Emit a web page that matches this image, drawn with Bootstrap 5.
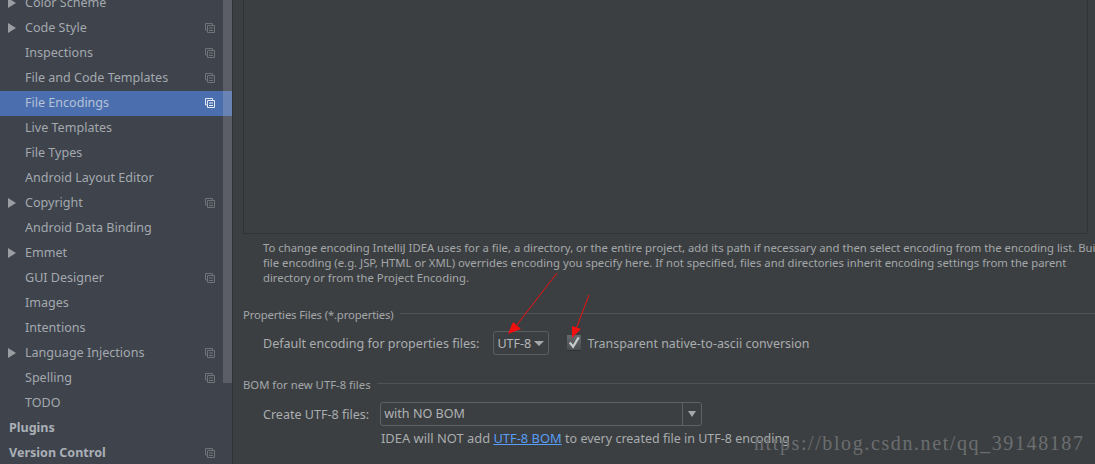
<!DOCTYPE html>
<html lang="en">
<head>
<meta charset="utf-8">
<title>File Encodings</title>
<link href="https://cdn.jsdelivr.net/npm/bootstrap@5.3.0/dist/css/bootstrap.min.css" rel="stylesheet">
<style>
html,body{height:464px;overflow:hidden}
body{background:#3c3f41;color:#a9adb0;font-family:"Noto Sans","Open Sans",sans-serif;font-size:12.5px;line-height:15px;position:relative}
.shell{height:464px;width:1095px}
.side{width:232px;background:#3e434c;flex:none;overflow:hidden;position:relative}
.side-list{margin-top:-9px;width:223px;flex:none}
.side-row{height:25px;padding-left:25px;padding-right:8px;padding-bottom:2px;position:relative;color:#a4a9ae;font-size:12.55px}
.side-row.top{padding-left:9px;font-weight:700;color:#aab0b6}
.side-row.sel{background:#4b6eaf;color:#b5c2d6}
.side-row .tri{position:absolute;left:8px;top:7px;width:0;height:0;border-left:8px solid #9a9da1;border-top:5px solid transparent;border-bottom:5px solid transparent}
.sel-strip{position:absolute;left:223px;top:91px;width:9px;height:25px;background:#6a83b5;z-index:2}
.scroll-track{width:9px;flex:none}
.scroll-thumb{width:9px;height:383px;background:#5b5e66}
.divider{width:1px;background:#2f3234;flex:none}
.main{padding-left:10px;min-width:0;flex:1 1 auto;overflow:hidden}
.tbl-box{height:234px;margin-right:7px;border-left:1px solid #313335;border-right:1px solid #313335;border-bottom:1px solid #313335;flex:none}
.hint{padding-left:20px;margin-top:6px;height:45px;font-size:11.3px;color:#a3a7aa;white-space:nowrap;overflow:hidden;flex:none}
.sec-head{color:#a3a7aa;font-size:11.3px;height:15px;margin-top:22px;flex:none}
.sec-tight{letter-spacing:-.15px}
.sec-rule{flex:1 1 auto;height:1px;background:#505355;margin-left:6px;margin-top:-3px}
.prop-row{padding-left:20px;margin-top:9px;height:24px;font-size:12.55px;flex:none}
.utf-pick{width:56px;height:24px;border:1px solid #5c5f61;border-radius:3px;margin-left:14px;padding-left:3px;color:#b4b7b9}
.pick-tri{width:0;height:0;border-top:5px solid #a5a8aa;border-left:5px solid transparent;border-right:5px solid transparent;margin-left:3px}
.chk{width:14px;height:16px;background:linear-gradient(#66696b,#4a4d4f);border-bottom:1px solid #2f3133;margin-left:18px;margin-right:6px;display:block;flex:none}
.trans-label{font-size:12.45px}
.bom-row{padding-left:20px;margin-top:10px;height:24px;font-size:12.55px;flex:none}
.combo{width:322px;height:24px;border:1px solid #5f6264;border-radius:3px;margin-left:11px;padding-left:3px;color:#b0b3b5;background:#3c3f41}
.combo-text{padding-bottom:2px}
.combo-btn{width:19px;height:22px;border-left:1px solid #5f6264}
.combo-btn i{width:0;height:0;border-top:6px solid #a5a8aa;border-left:4px solid transparent;border-right:4px solid transparent;display:block}
.bom-note{padding-left:138px;margin-top:5px;font-size:12.9px;white-space:nowrap;color:#a8acaf;flex:none}
.bom-note a{color:#589df6;text-decoration:underline}
.note-tail{font-size:12.5px}
.mark-text{position:absolute;left:754px;top:432px;font-family:"Liberation Serif",serif;font-size:20px;line-height:22px;letter-spacing:1.6px;color:#6b6e70;white-space:nowrap;z-index:5}
.arrows{position:absolute;left:0;top:0;z-index:6;pointer-events:none}
</style>
</head>
<body>
<div class="shell d-flex">
  <div class="side d-flex">
    <div class="side-list">
      <div class="side-row d-flex align-items-center justify-content-between"><span class="tri"></span><span>Color Scheme</span></div>
      <div class="side-row d-flex align-items-center justify-content-between"><span class="tri"></span><span>Code Style</span><svg width="10" height="10" viewBox="0 0 10 10" fill="none" stroke="#6f7378"><path d="M7.5 2v-1.500h-7v6.500h2"/><path d="M2.500 2.500h7v7h-7z"/><path d="M4 5h4M4 7.500h4"/></svg></div>
      <div class="side-row d-flex align-items-center justify-content-between"><span>Inspections</span><svg width="10" height="10" viewBox="0 0 10 10" fill="none" stroke="#6f7378"><path d="M7.5 2v-1.500h-7v6.500h2"/><path d="M2.500 2.500h7v7h-7z"/><path d="M4 5h4M4 7.500h4"/></svg></div>
      <div class="side-row d-flex align-items-center justify-content-between"><span>File and Code Templates</span><svg width="10" height="10" viewBox="0 0 10 10" fill="none" stroke="#6f7378"><path d="M7.5 2v-1.500h-7v6.500h2"/><path d="M2.500 2.500h7v7h-7z"/><path d="M4 5h4M4 7.500h4"/></svg></div>
      <div class="side-row sel d-flex align-items-center justify-content-between"><span>File Encodings</span><svg width="10" height="10" viewBox="0 0 10 10" fill="none" stroke="#e3e9f3"><path d="M7.5 2v-1.500h-7v6.500h2"/><path d="M2.500 2.500h7v7h-7z"/><path d="M4 5h4M4 7.500h4"/></svg></div>
      <div class="side-row d-flex align-items-center"><span>Live Templates</span></div>
      <div class="side-row d-flex align-items-center"><span>File Types</span></div>
      <div class="side-row d-flex align-items-center"><span>Android Layout Editor</span></div>
      <div class="side-row d-flex align-items-center justify-content-between"><span class="tri"></span><span>Copyright</span><svg width="10" height="10" viewBox="0 0 10 10" fill="none" stroke="#6f7378"><path d="M7.5 2v-1.500h-7v6.500h2"/><path d="M2.500 2.500h7v7h-7z"/><path d="M4 5h4M4 7.500h4"/></svg></div>
      <div class="side-row d-flex align-items-center"><span>Android Data Binding</span></div>
      <div class="side-row d-flex align-items-center"><span class="tri"></span><span>Emmet</span></div>
      <div class="side-row d-flex align-items-center justify-content-between"><span>GUI Designer</span><svg width="10" height="10" viewBox="0 0 10 10" fill="none" stroke="#6f7378"><path d="M7.5 2v-1.500h-7v6.500h2"/><path d="M2.500 2.500h7v7h-7z"/><path d="M4 5h4M4 7.500h4"/></svg></div>
      <div class="side-row d-flex align-items-center"><span>Images</span></div>
      <div class="side-row d-flex align-items-center"><span>Intentions</span></div>
      <div class="side-row d-flex align-items-center justify-content-between"><span class="tri"></span><span>Language Injections</span><svg width="10" height="10" viewBox="0 0 10 10" fill="none" stroke="#6f7378"><path d="M7.5 2v-1.500h-7v6.500h2"/><path d="M2.500 2.500h7v7h-7z"/><path d="M4 5h4M4 7.500h4"/></svg></div>
      <div class="side-row d-flex align-items-center justify-content-between"><span>Spelling</span><svg width="10" height="10" viewBox="0 0 10 10" fill="none" stroke="#6f7378"><path d="M7.5 2v-1.500h-7v6.500h2"/><path d="M2.500 2.500h7v7h-7z"/><path d="M4 5h4M4 7.500h4"/></svg></div>
      <div class="side-row d-flex align-items-center"><span>TODO</span></div>
      <div class="side-row top d-flex align-items-center"><span>Plugins</span></div>
      <div class="side-row top d-flex align-items-center justify-content-between"><span>Version Control</span><svg width="10" height="10" viewBox="0 0 10 10" fill="none" stroke="#6f7378"><path d="M7.5 2v-1.500h-7v6.500h2"/><path d="M2.500 2.500h7v7h-7z"/><path d="M4 5h4M4 7.500h4"/></svg></div>
    </div>
    <div class="scroll-track"><div class="scroll-thumb"></div></div>
    <div class="sel-strip"></div>
  </div>
  <div class="divider"></div>
  <div class="main d-flex flex-column">
    <div class="tbl-box"></div>
    <div class="hint">To change encoding IntelliJ IDEA uses for a file, a directory, or the entire project, add its path if necessary and then select encoding from the encoding list. Built-in<br>file encoding (e.g. JSP, HTML or XML) overrides encoding you specify here. If not specified, files and directories inherit encoding settings from the parent<br>directory or from the Project Encoding.</div>
    <div class="sec-head d-flex align-items-center"><span class="sec-tight">Properties Files (*.properties)</span><span class="sec-rule"></span></div>
    <div class="prop-row d-flex align-items-center">
      <span>Default encoding for properties files:</span>
      <span class="utf-pick d-flex align-items-center"><span>UTF-8</span><span class="pick-tri"></span></span>
      <svg class="chk" viewBox="0 0 14 16"><path d="M2.500 8l3.500 4.500 6-10" fill="none" stroke="#c6c8c9" stroke-width="2.400"/></svg>
      <span class="trans-label">Transparent native-to-ascii conversion</span>
    </div>
    <div class="sec-head d-flex align-items-center"><span>BOM for new UTF-8 files</span><span class="sec-rule"></span></div>
    <div class="bom-row d-flex align-items-center">
      <span>Create UTF-8 files:</span>
      <span class="combo d-flex align-items-center justify-content-between"><span class="combo-text">with NO BOM</span><span class="combo-btn d-flex align-items-center justify-content-center"><i></i></span></span>
    </div>
    <div class="bom-note">IDEA will NOT add <a href="#">UTF-8 BOM</a> <span class="note-tail">to every created file in UTF-8 encoding</span></div>
  </div>
</div>
<div class="mark-text">https://blog.csdn.net/qq_39148187</div>
<svg class="arrows" width="1095" height="464" viewBox="0 0 1095 464">
  <path d="M557 273L516 326" stroke="#f01010" fill="none"/>
  <path d="M508 334L513 322L521 329Z" fill="#f01010"/>
  <path d="M589 295L576 329" stroke="#f01010" fill="none"/>
  <path d="M572 338L572 326L581 329Z" fill="#f01010"/>
</svg>
</body>
</html>
